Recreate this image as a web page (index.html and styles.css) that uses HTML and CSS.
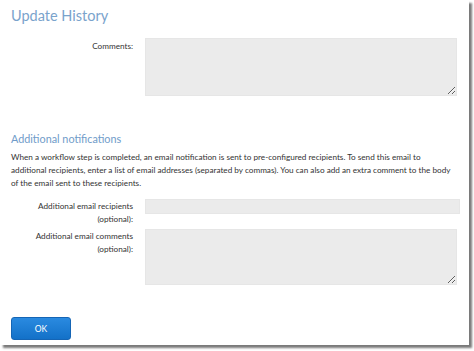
FILE: index.html
```html
<!DOCTYPE html>
<html>
<head>
<meta charset="utf-8">
<link rel="stylesheet" href="styles.css">
</head>
<body>
<div class="page">
  <h1 class="title">Update History</h1>
  <div class="row row-comments">
    <label class="label">Comments:</label>
    <textarea class="area area-comments"></textarea>
  </div>
  <h2 class="subtitle">Additional notifications</h2>
  <p class="desc">When a workflow step is completed, an email notification is sent to pre-configured recipients. To send this email to<br>additional recipients, enter a list of email addresses (separated by commas). You can also add an extra comment to the body<br>of the email sent to these recipients.</p>
  <div class="row row-recipients">
    <label class="label">Additional email recipients<br>(optional):</label>
    <input class="input" type="text">
  </div>
  <div class="row row-extra">
    <label class="label">Additional email comments<br>(optional):</label>
    <textarea class="area area-extra"></textarea>
  </div>
  <div class="actions">
    <button class="ok">OK</button>
  </div>
</div>
</body>
</html>
```

FILE: styles.css
```css
html, body {
  margin: 0;
  padding: 0;
  background: #ffffff;
}
body {
  width: 474px;
  height: 351px;
  overflow: hidden;
}
.page {
  width: 469px;
  height: 345px;
  box-sizing: border-box;
  background: #ffffff;
  box-shadow: 3px 3px 2px #7a7a7a;
  padding: 6px 0 0 11px;
  font-family: "Lato", "Open Sans", sans-serif;
  color: #333333;
  display: flex;
  flex-direction: column;
}
.title {
  margin: 0;
  font-weight: 400;
  font-size: 14.5px;
  line-height: 20px;
  color: #7aa3cc;
}
.row {
  display: grid;
  grid-template-columns: 122px 1fr;
  column-gap: 12px;
  align-items: start;
}
.row-comments {
  margin-top: 12px;
}
.label {
  text-align: right;
  font-size: 8.2px;
  line-height: 12.5px;
  color: #333;
}
.row-comments .label {
  padding-top: 2px;
}
.area {
  display: block;
  box-sizing: border-box;
  background: #ebebeb;
  border: 1px solid #e6e6e6;
  border-radius: 0;
  margin: 0;
  padding: 0;
  resize: both;
  width: 312px;
}
.area-comments {
  height: 58px;
}
.subtitle {
  margin: 35px 0 0 0;
  font-weight: 400;
  font-size: 10.8px;
  line-height: 16px;
  color: #6f9bc9;
}
.desc {
  margin: 4px 0 0 0;
  width: 456px;
  font-size: 8.2px;
  line-height: 13px;
  color: #333;
}
.row-recipients {
  margin-top: 9px;
}
.input {
  display: block;
  box-sizing: border-box;
  width: 315px;
  height: 15px;
  margin: 0;
  padding: 0;
  border: 1px solid #e6e6e6;
  background: #ebebeb;
}
.row-recipients .label {
  margin-top: 1px;
}
.row-extra {
  margin-top: 4px;
}
.row-extra .label {
  margin-top: 1px;
}
.area-extra {
  height: 56px;
}
.actions {
  margin-top: 32px;
}
.ok {
  display: block;
  width: 60px;
  height: 23px;
  border: 1px solid #1565b5;
  border-radius: 3px;
  background: linear-gradient(#2a8ae0, #1371c8);
  color: #ffffff;
  font-family: "Lato", "Open Sans", sans-serif;
  font-size: 8.5px;
  padding: 0;
}
```
